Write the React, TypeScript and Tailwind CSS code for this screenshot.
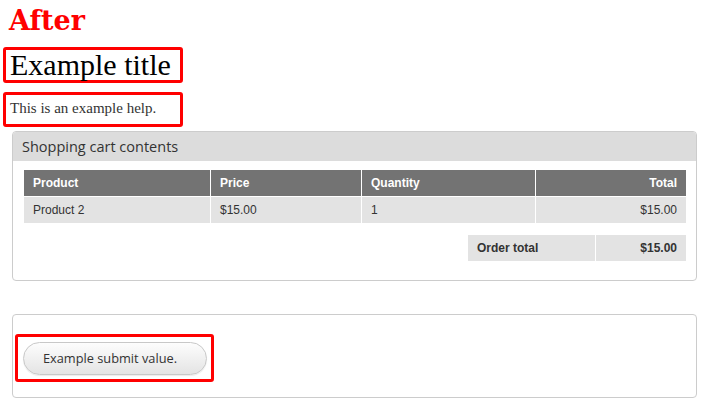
const serif = "font-['Liberation_Serif',serif]";
const sans = "font-['Liberation_Sans',Arial,sans-serif]";
const open = "font-['Open_Sans',sans-serif]";

const columns = [
  { label: "Product", align: "text-left" },
  { label: "Price", align: "text-left" },
  { label: "Quantity", align: "text-left" },
  { label: "Total", align: "text-right" },
];

const rows = [["Product 2", "$15.00", "1", "$15.00"]];

function RedBox({ children, className }: { children: React.ReactNode; className: string }) {
  return <div className={`border-[3px] border-[#ff0000] rounded-[3px] ${className}`}>{children}</div>;
}

export default function App() {
  return (
    <div className="w-[708px] h-[409px] bg-white overflow-hidden">
      <div className="h-[44px] pl-[9px] pt-[3px] font-['DejaVu_Serif',serif] font-bold text-[27px] leading-[36px] text-[#ff0000]">
        After
      </div>

      <RedBox className={`ml-[3px] mt-[3px] w-[180px] h-[36px] pl-[4px] ${serif} text-[30px] leading-[29px] text-black`}>
        Example title
      </RedBox>

      <RedBox className={`ml-[3px] mt-[9px] w-[180px] h-[35px] pl-[4px] pt-[3px] ${serif} text-[15px] leading-[20px] text-[#333]`}>
        This is an example help.
      </RedBox>

      <section className="ml-[12px] mt-[4px] w-[685px] h-[150px] border border-[#cccccc] rounded-[4px] overflow-hidden">
        <div className={`h-[29px] bg-[#dcdcdc] pl-[9px] flex items-center ${open} text-[14.5px] text-[#333]`}>
          Shopping cart contents
        </div>
        <div className={`ml-[11px] mt-[9px] w-[662px] ${sans} text-[12px]`}>
          <div className="grid grid-cols-[186px_150px_173px_150px] gap-[1px] bg-white">
            {columns.map((c) => (
              <div key={c.label} className={`h-[26px] leading-[26px] px-[9px] bg-[#737373] text-white font-bold ${c.align}`}>
                {c.label}
              </div>
            ))}
            {rows.map((r) =>
              r.map((cell, i) => (
                <div key={i} className={`h-[26px] leading-[26px] px-[9px] bg-[#e3e3e3] text-[#333] ${columns[i].align}`}>
                  {cell}
                </div>
              ))
            )}
          </div>
          <div className="mt-[12px] ml-auto w-[218px] grid grid-cols-[127px_90px] gap-x-[1px] bg-white font-bold text-[#333]">
            <div className="h-[26px] leading-[26px] px-[9px] bg-[#e3e3e3]">Order total</div>
            <div className="h-[26px] leading-[26px] px-[9px] bg-[#e3e3e3] text-right">$15.00</div>
          </div>
        </div>
      </section>

      <section className="ml-[12px] mt-[33px] w-[685px] h-[84px] border border-[#cccccc] rounded-[4px] pt-[19px] pl-[2px]">
        <RedBox className="w-[199px] h-[48px] pl-[5px] pt-[5px]">
          <button
            className={`w-[184px] h-[33px] pr-[10px] rounded-full border border-[#c8c8c8] bg-gradient-to-b from-[#fdfdfd] to-[#e4e4e4] ${open} text-[12.8px] text-[#333] shadow-[0_1px_1px_rgba(0,0,0,0.08)]`}
          >
            Example submit value.
          </button>
        </RedBox>
      </section>
    </div>
  );
}
